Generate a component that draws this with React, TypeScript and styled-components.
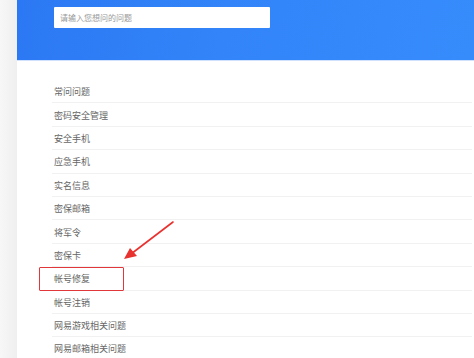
import React from 'react';
import styled, { createGlobalStyle } from 'styled-components';

const GlobalStyle = createGlobalStyle`
  html, body {
    margin: 0;
    padding: 0;
    background: #fff;
    font-family: "Noto Sans CJK SC", "Noto Sans", sans-serif;
    overflow: hidden;
  }
`;

const Page = styled.div`
  display: flex;
  width: 474px;
  height: 358px;
`;

const SideStrip = styled.div`
  width: 17px;
  flex-shrink: 0;
  background: linear-gradient(to right, #f7f7f7, #efefef);
`;

const Main = styled.div`
  flex: 1;
  display: flex;
  flex-direction: column;
  position: relative;
`;

const Banner = styled.div`
  flex-shrink: 0;
  height: 61px;
  padding: 7px 0 0 37px;
  box-sizing: border-box;
  background: linear-gradient(100deg, #2c78f4 0%, #3284f8 45%, #378cfc 100%);
  border-bottom: 1px solid #cfe1fd;
`;

const SearchBox = styled.input`
  display: block;
  width: 216px;
  height: 21px;
  box-sizing: border-box;
  border: none;
  border-radius: 1px;
  padding: 0 6px;
  font-family: inherit;
  font-size: 8px;
  color: #333;
  outline: none;
  &::placeholder {
    color: #999;
  }
`;

const List = styled.ul`
  flex-shrink: 0;
  list-style: none;
  margin: 0;
  padding: 19px 2px 0 35px;
`;

const Row = styled.li`
  position: relative;
  height: 23.4px;
  box-sizing: border-box;
  display: flex;
  align-items: center;
  padding: 1px 0 0 2px;
  font-size: 9px;
  color: #666;
  border-bottom: 1.5px solid #f1f1f1;
`;

const Marker = styled.span`
  position: absolute;
  left: -13px;
  top: 0px;
  width: 85px;
  height: 24px;
  box-sizing: border-box;
  border: 1.5px solid #e2373a;
  border-radius: 1px;
`;

const Arrow = styled.svg`
  position: absolute;
  left: 100px;
  top: 216px;
  pointer-events: none;
`;

const items = [
  '常问问题',
  '密码安全管理',
  '安全手机',
  '应急手机',
  '实名信息',
  '密保邮箱',
  '将军令',
  '密保卡',
  '帐号修复',
  '帐号注销',
  '网易游戏相关问题',
  '网易邮箱相关问题',
];

const App: React.FC = () => {
  return (
    <Page>
      <GlobalStyle />
      <SideStrip />
      <Main>
        <Banner>
          <SearchBox placeholder="请输入您想问的问题" />
        </Banner>
        <List>
          {items.map((label) => (
            <Row key={label}>
              {label === '帐号修复' && <Marker />}
              {label}
            </Row>
          ))}
        </List>
        {/* red annotation arrow */}
        <Arrow width="70" height="50" viewBox="0 0 70 50">
          <line x1="56" y1="6" x2="14" y2="38" stroke="#e8322f" strokeWidth="1.6" strokeLinecap="round" />
          <polygon points="7,43 13,32 20,40" fill="#e8322f" />
        </Arrow>
      </Main>
    </Page>
  );
};

export default App;
